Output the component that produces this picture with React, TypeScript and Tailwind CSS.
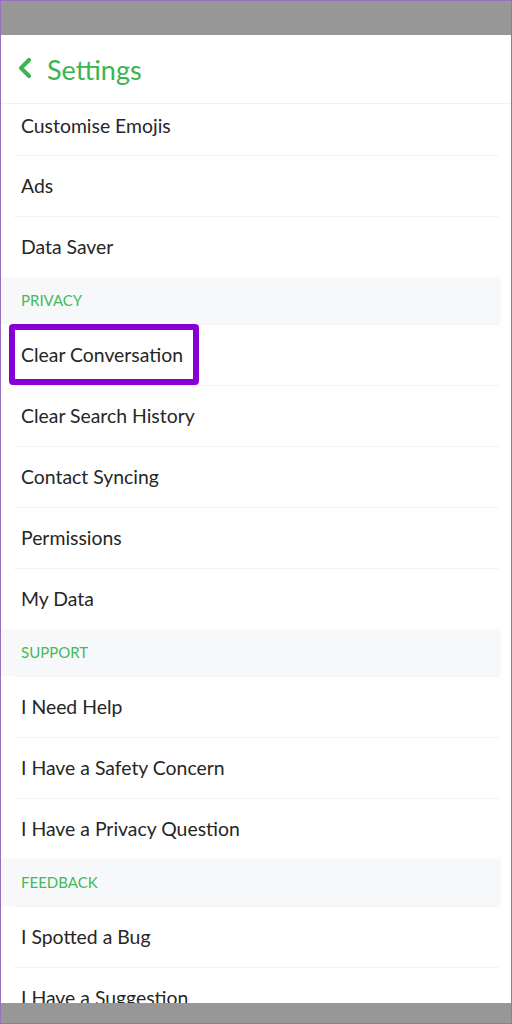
import React from 'react';

type Row = { label: string; kind: 'item' | 'section' };

const rows: Row[] = [
  { label: 'Ads', kind: 'item' },
  { label: 'Data Saver', kind: 'item' },
  { label: 'PRIVACY', kind: 'section' },
  { label: 'Clear Conversation', kind: 'item' },
  { label: 'Clear Search History', kind: 'item' },
  { label: 'Contact Syncing', kind: 'item' },
  { label: 'Permissions', kind: 'item' },
  { label: 'My Data', kind: 'item' },
  { label: 'SUPPORT', kind: 'section' },
  { label: 'I Need Help', kind: 'item' },
  { label: 'I Have a Safety Concern', kind: 'item' },
  { label: 'I Have a Privacy Question', kind: 'item' },
  { label: 'FEEDBACK', kind: 'section' },
  { label: 'I Spotted a Bug', kind: 'item' },
  { label: 'I Have a Suggestion', kind: 'item' },
];

const App: React.FC = () => {
  return (
    <div
      className="relative w-[512px] h-[1024px] overflow-hidden bg-white border border-[#9a6fbd]"
      style={{ fontFamily: 'Lato, "Noto Sans", sans-serif' }}
    >
      <div className="h-[34px] bg-[#979797]" />

      {/* header */}
      <div className="h-[69px] flex items-center pl-[17px] border-b border-[#f1f1f3]">
        <svg width="14" height="20" viewBox="0 0 14 20" className="mt-[-2px]">
          <path d="M11 2 L3 10 L11 18" fill="none" stroke="#3cb550" strokeWidth="4" strokeLinecap="round" strokeLinejoin="round" />
        </svg>
        <span className="ml-[15px] text-[27px] text-[#3cb550] leading-none">Settings</span>
      </div>

      {/* first row is partly scrolled under the header */}
      <div className="h-[51px] flex items-center pb-[8px] pl-[20px] text-[19.4px] text-[#262626]">
        Customise Emojis
      </div>

      {rows.map((r) =>
        r.kind === 'section' ? (
          <div key={r.label} className="h-[47px] mr-[10px] flex items-center pl-[20px] bg-[#f7f8fa] text-[15px] text-[#45b95c]">
            {r.label}
          </div>
        ) : (
          <div key={r.label} className="relative h-[61px] flex items-center pl-[20px] text-[19.4px] text-[#262626]">
            <div className="absolute top-0 left-[13px] right-[12px] border-t border-[#f3f3f5]" />
            {r.label}
            {r.label === 'Clear Conversation' && (
              <div className="absolute left-[8px] top-0 w-[190px] h-[61px] border-[6px] border-[#8600d6] rounded-[4px]" />
            )}
          </div>
        )
      )}

      <div className="absolute left-0 right-0 bottom-0 h-[20px] bg-[#979797]" />
    </div>
  );
};

export default App;
